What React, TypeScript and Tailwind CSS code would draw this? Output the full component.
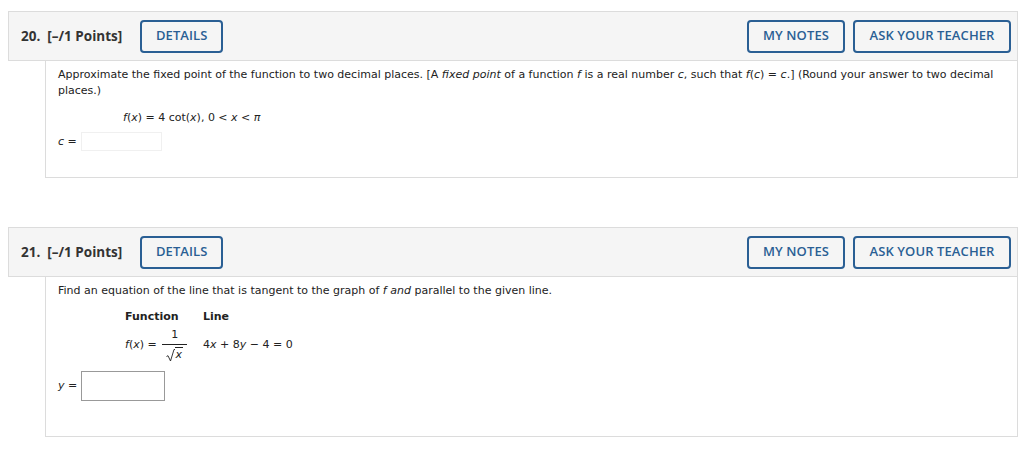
import React from 'react'

function Btn({ children, className = '' }: { children: React.ReactNode; className?: string }) {
  return (
    <button
      className={`h-[33px] whitespace-nowrap rounded-[4px] border-2 border-[#2a5f94] px-[8px] text-[13px] font-semibold uppercase tracking-[0.1px] text-[#2a5f94] ${className}`}
      style={{ fontFamily: '"Open Sans", sans-serif' }}
    >
      {children}
    </button>
  )
}

function Header({ num }: { num: number }) {
  return (
    <div className="flex h-[50px] items-center border border-[#dcdcdc] bg-[#f5f5f5] pl-[12px] pr-[6px]">
      <span
        className="text-[13.5px] font-bold text-[#333]"
        style={{ fontFamily: '"Open Sans", sans-serif' }}
      >
        {num}.&nbsp;&nbsp;[–/1 Points]
      </span>
      <Btn className="ml-[18px] w-[83px]">Details</Btn>
      <div className="ml-auto flex gap-[8px]">
        <Btn className="w-[98px]">My Notes</Btn>
        <Btn className="w-[158px]">Ask Your Teacher</Btn>
      </div>
    </div>
  )
}

const verdana = { fontFamily: '"DejaVu Sans", Verdana, sans-serif' }

export default function App() {
  return (
    <div className="min-h-[461px] w-[1024px] bg-white pt-[11px] pl-[8px] pr-[6px] text-[#222]" style={verdana}>
      {/* Question 20 */}
      <Header num={20} />
      <div className="ml-[37px] h-[117px] border-x border-b border-[#dcdcdc] pl-[12px] pr-[10px] pt-[6px] text-[11px] leading-[16px]">
        <p>
          Approximate the fixed point of the function to two decimal places. [A <i>fixed point</i> of a function <i>f</i> is a real number <i>c</i>, such that <i>f</i>(<i>c</i>) = <i>c</i>.] (Round your answer to two decimal places.)
        </p>
        <p className="mt-[11px] pl-[65px]">
          <i>f</i>(<i>x</i>) = 4 cot(<i>x</i>), 0 &lt; <i>x</i> &lt; <i>π</i>
        </p>
        <div className="mt-[6px] flex items-center">
          <span className="w-[23px]"><i>c</i> =</span>
          <div className="h-[19px] w-[81px] border border-[#f0f0f0]" />
        </div>
      </div>

      {/* Question 21 */}
      <div className="mt-[49px]">
        <Header num={21} />
        <div className="ml-[37px] h-[160px] border-x border-b border-[#dcdcdc] pl-[12px] pt-[6px] text-[11px] leading-[16px]">
          <p>
            Find an equation of the line that is tangent to the graph of <i>f and</i> parallel to the given line.
          </p>
          <div className="mt-[10px] pl-[67px]">
            <div className="flex font-bold">
              <span className="w-[78px]">Function</span>
              <span>Line</span>
            </div>
            <div className="mt-[2px] flex items-center">
              <div className="flex w-[78px] items-center">
                <span><i>f</i>(<i>x</i>) =&nbsp;</span>
                <span className="ml-[2px] flex flex-col items-center">
                  <span className="px-[3px] leading-[16px]">1</span>
                  <span className="mt-[1px] h-px w-[25px] bg-[#222]" />
                  <span className="mt-[2px] flex items-end leading-[14px]">
                    <svg width="9" height="13" viewBox="0 0 9 13">
                      <path d="M0.5 7.5 L2 6.7 L4.5 12 L8 0.5 L9 0.5" fill="none" stroke="#222" strokeWidth="0.9" />
                    </svg>
                    <span className="border-t border-[#222] pr-[1px]"><i>x</i></span>
                  </span>
                </span>
              </div>
              <span>4<i>x</i> + 8<i>y</i> − 4 = 0</span>
            </div>
          </div>
          <div className="mt-[9px] flex items-center">
            <span className="w-[23px]"><i>y</i> =</span>
            <div className="h-[30px] w-[84px] border border-[#999]" />
          </div>
        </div>
      </div>
    </div>
  )
}
